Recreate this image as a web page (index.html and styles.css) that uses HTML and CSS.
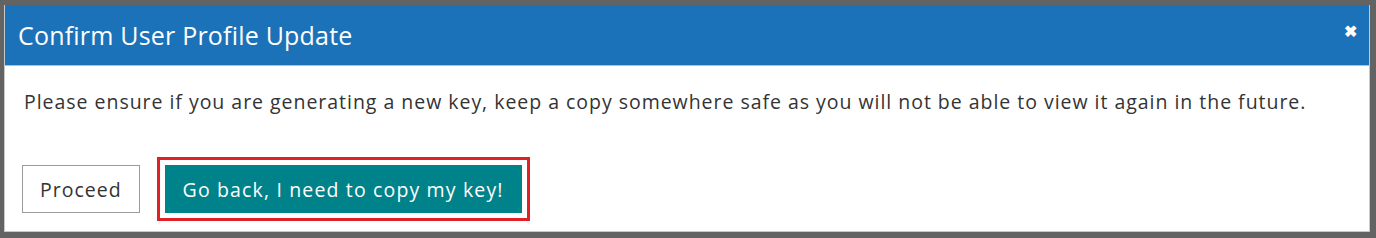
FILE: index.html
```html
<!DOCTYPE html>
<html lang="en">
<head>
  <meta charset="UTF-8">
  <title>Confirm User Profile Update</title>
  <link rel="stylesheet" href="styles.css">
</head>
<body>

  <!-- Confirm dialog -->
  <div class="modal">
    <div class="modal-header">
      <h3 class="modal-title">Confirm User Profile Update</h3>
      <span class="close">&#10006;</span>
    </div>

    <div class="modal-body">
      <p>Please ensure if you are generating a new key, keep a copy somewhere safe as you will not be able to view it again in the future.</p>
    </div>

    <div class="modal-footer">
      <button class="btn btn-default">Proceed</button>
      <div class="highlight">
        <button class="btn btn-primary">Go back, I need to copy my key!</button>
      </div>
    </div>
  </div>

</body>
</html>
```

FILE: styles.css
```css
body {
  margin: 0;
  background-color: #636363;
  font-family: 'Open Sans', sans-serif;
  color: #333;
}

.modal {
  margin: 5px 6px 0 4px;
  background-color: #fff;
  border: 1px solid #c8c8c8;
  border-top: none;
  height: 227px;
  box-sizing: border-box;
}

.modal-header {
  background-color: #1b72b8;
  height: 60px;
  padding: 0 12px 0 13px;
  display: flex;
  align-items: center;
  justify-content: space-between;
  border-bottom: 1px solid #9fc3e0;
}

.modal-title {
  margin: 0;
  font-size: 25px;
  font-weight: normal;
  letter-spacing: 0.2px;
  color: #fff;
}

.close {
  color: #fff;
  font-size: 16px;
  font-weight: bold;
  margin-top: -8px;
}

.modal-body {
  padding: 24px 20px 0 19px;
}

.modal-body p {
  margin: 0;
  font-size: 19.5px;
  letter-spacing: 0.97px;
  line-height: 24px;
}

.modal-footer {
  display: flex;
  align-items: center;
  gap: 17px;
  padding: 43px 0 0 17px;
}

.btn {
  font-family: 'Open Sans', sans-serif;
  font-size: 19.5px;
  letter-spacing: 1px;
  height: 48px;
  padding: 0 17px;
  cursor: pointer;
}

.btn-default {
  background-color: #fff;
  color: #333;
  border: 1px solid #9a9a9a;
}

.btn-primary {
  background-color: #00828a;
  color: #fff;
  border: none;
  padding: 0 18px;
  letter-spacing: 1.15px;
}

.highlight {
  border: 3px solid #e01f26;
  padding: 5px;
  display: flex;
}
```
